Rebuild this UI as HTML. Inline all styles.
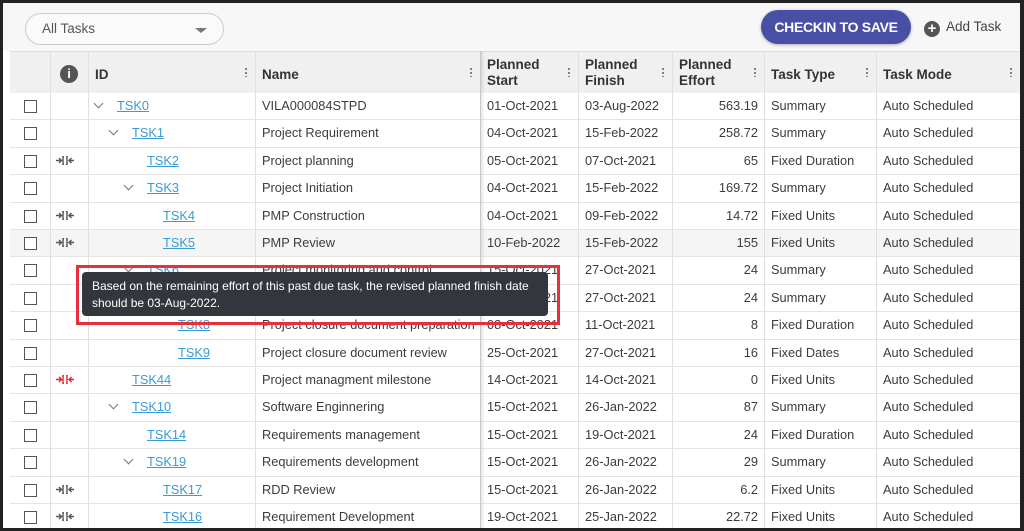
<!DOCTYPE html>
<html><head><meta charset="utf-8"><style>
*{box-sizing:border-box;margin:0;padding:0}
body{width:1024px;height:531px;overflow:hidden;background:#222;font-family:"Liberation Sans",sans-serif;font-size:12.8px;color:#3c3c3c;position:relative}
#f{position:absolute;left:3px;top:3px;width:1017px;height:525px;background:#fff;overflow:hidden}
.top{position:absolute;left:0;top:0;width:100%;height:48px;background:#f7f7f7}
.sel{position:absolute;left:22px;top:10px;width:199px;height:32px;border:1px solid #ccc;border-radius:16px;background:#fafafa;color:#555;padding:7px 0 0 16px;font-size:13.5px}
.sel:after{content:"";position:absolute;right:16px;top:14px;border:5px solid transparent;border-top:5px solid #777;border-bottom:0;border-left-width:6px;border-right-width:6px}
.btn{position:absolute;left:758px;top:7px;width:150px;height:34px;border-radius:17px;background:#4a4fa6;color:#fff;font-weight:bold;font-size:14px;text-align:center;line-height:34px;box-shadow:0 1px 3px rgba(0,0,0,.3);letter-spacing:-0.3px}
.add{position:absolute;left:921px;top:16px;color:#444;font-size:13.5px}
.add b{display:inline-block;width:16px;height:16px;border-radius:50%;background:#555;color:#fff;text-align:center;line-height:16px;font-size:15px;margin-right:6px;vertical-align:-2px}
.hdr{position:absolute;left:7px;top:48px;height:42px;width:1010px;background:#f0f0f0;border-top:1px solid #ddd}
.row{position:absolute;left:7px;height:27.4px;width:1010px;border-bottom:1px solid #e4e4e4}
.c{position:absolute;top:0;height:100%;border-left:1px solid #e0e0e0;white-space:nowrap;overflow:hidden}
.row .c{line-height:26px}
.hdr .c{font-weight:bold;color:#333;font-size:13.5px}
.k{position:absolute;right:8px;top:15px;width:2px;height:10px;background:radial-gradient(circle,#777 1px,transparent 1.2px) 0 0/2px 4px}
.cb{position:absolute;left:14px;top:7px;width:13px;height:13px;border:1px solid #555;background:#fff}
a{color:#3a9bd5;text-decoration:underline;position:absolute}
.ch{position:absolute;top:7px;width:7px;height:7px;border-right:1.5px solid #777;border-bottom:1.5px solid #777;transform:rotate(45deg)}
.ic{position:absolute;left:5px;top:8px}
.r{text-align:right;padding-right:6px}
.p{padding-left:6px}
.tip{position:absolute;left:79px;top:269px;width:466px;height:44px;background:#33363d;border-radius:4px;color:#fff;font-size:12px;padding:6px 10px;line-height:17px}
.red{position:absolute;left:73px;top:262px;width:484px;height:60px;border:3.5px solid #e8303a}
.sh{position:absolute;left:477px;top:48px;width:5px;height:480px;background:linear-gradient(to right,rgba(0,0,0,.12),rgba(0,0,0,0))}
</style></head><body><div id="f">
<div class="top"><div class="sel">All Tasks</div><div class="btn">CHECKIN TO SAVE</div><div class="add"><b>+</b>Add Task</div></div>
<div class="hdr">
<div class="c" style="left:0;width:40px;border-left:0"></div>
<div class="c" style="left:40px;width:38px"><span style="position:absolute;left:9px;top:13px;width:18px;height:18px;border-radius:50%;background:#555;color:#fff;text-align:center;line-height:18px;font-size:13px">i</span></div>
<div class="c" style="left:78px;width:167px"><span style="position:absolute;left:6px;top:15px">ID</span><i class="k"></i></div>
<div class="c" style="left:245px;width:225px"><span style="position:absolute;left:6px;top:15px">Name</span><i class="k"></i></div>
<div class="c" style="left:470px;width:98px"><span style="position:absolute;left:6px;top:5px;line-height:16px">Planned<br>Start</span><i class="k"></i></div>
<div class="c" style="left:568px;width:94px"><span style="position:absolute;left:6px;top:5px;line-height:16px">Planned<br>Finish</span><i class="k"></i></div>
<div class="c" style="left:662px;width:92px"><span style="position:absolute;left:6px;top:5px;line-height:16px">Planned<br>Effort</span><i class="k"></i></div>
<div class="c" style="left:754px;width:112px"><span style="position:absolute;left:6px;top:15px">Task Type</span><i class="k"></i></div>
<div class="c" style="left:866px;width:144px"><span style="position:absolute;left:6px;top:15px">Task Mode</span><i class="k"></i></div>
</div>
<svg width="0" height="0" style="position:absolute"><defs><g id="ico"><path d="M0 4.5h5M3 2l2.5 2.5L3 7M8 .5H7v8h1M10 .5h1v8h-1M13 4.5h5M15.5 2L13 4.5 15.5 7" fill="none" stroke-width="1.4"/></g></defs></svg>

<div class="row" style="top:90px"><div class="c" style="left:0;width:40px;border-left:0"><i class="cb"></i></div><div class="c" style="left:40px;width:38px"></div><div class="c" style="left:78px;width:167px"><i class="ch" style="left:6px"></i><a style="left:28px">TSK0</a></div><div class="c p" style="left:245px;width:225px">VILA000084STPD</div><div class="c p" style="left:470px;width:98px">01-Oct-2021</div><div class="c p" style="left:568px;width:94px">03-Aug-2022</div><div class="c r" style="left:662px;width:92px">563.19</div><div class="c p" style="left:754px;width:112px">Summary</div><div class="c p" style="left:866px;width:144px">Auto Scheduled</div></div>

<div class="row" style="top:117.4px"><div class="c" style="left:0;width:40px;border-left:0"><i class="cb"></i></div><div class="c" style="left:40px;width:38px"></div><div class="c" style="left:78px;width:167px"><i class="ch" style="left:21px"></i><a style="left:43px">TSK1</a></div><div class="c p" style="left:245px;width:225px">Project Requirement</div><div class="c p" style="left:470px;width:98px">04-Oct-2021</div><div class="c p" style="left:568px;width:94px">15-Feb-2022</div><div class="c r" style="left:662px;width:92px">258.72</div><div class="c p" style="left:754px;width:112px">Summary</div><div class="c p" style="left:866px;width:144px">Auto Scheduled</div></div>

<div class="row" style="top:144.8px"><div class="c" style="left:0;width:40px;border-left:0"><i class="cb"></i></div><div class="c" style="left:40px;width:38px"><svg class="ic" width="18" height="9" stroke="#555"><use href="#ico"/></svg></div><div class="c" style="left:78px;width:167px"><a style="left:58px">TSK2</a></div><div class="c p" style="left:245px;width:225px">Project planning</div><div class="c p" style="left:470px;width:98px">05-Oct-2021</div><div class="c p" style="left:568px;width:94px">07-Oct-2021</div><div class="c r" style="left:662px;width:92px">65</div><div class="c p" style="left:754px;width:112px">Fixed Duration</div><div class="c p" style="left:866px;width:144px">Auto Scheduled</div></div>

<div class="row" style="top:172.2px"><div class="c" style="left:0;width:40px;border-left:0"><i class="cb"></i></div><div class="c" style="left:40px;width:38px"></div><div class="c" style="left:78px;width:167px"><i class="ch" style="left:36px"></i><a style="left:58px">TSK3</a></div><div class="c p" style="left:245px;width:225px">Project Initiation</div><div class="c p" style="left:470px;width:98px">04-Oct-2021</div><div class="c p" style="left:568px;width:94px">15-Feb-2022</div><div class="c r" style="left:662px;width:92px">169.72</div><div class="c p" style="left:754px;width:112px">Summary</div><div class="c p" style="left:866px;width:144px">Auto Scheduled</div></div>

<div class="row" style="top:199.6px"><div class="c" style="left:0;width:40px;border-left:0"><i class="cb"></i></div><div class="c" style="left:40px;width:38px"><svg class="ic" width="18" height="9" stroke="#555"><use href="#ico"/></svg></div><div class="c" style="left:78px;width:167px"><a style="left:74px">TSK4</a></div><div class="c p" style="left:245px;width:225px">PMP Construction</div><div class="c p" style="left:470px;width:98px">04-Oct-2021</div><div class="c p" style="left:568px;width:94px">09-Feb-2022</div><div class="c r" style="left:662px;width:92px">14.72</div><div class="c p" style="left:754px;width:112px">Fixed Units</div><div class="c p" style="left:866px;width:144px">Auto Scheduled</div></div>

<div class="row" style="top:227px;background:#f5f5f5"><div class="c" style="left:0;width:40px;border-left:0"><i class="cb"></i></div><div class="c" style="left:40px;width:38px"><svg class="ic" width="18" height="9" stroke="#555"><use href="#ico"/></svg></div><div class="c" style="left:78px;width:167px"><a style="left:74px">TSK5</a></div><div class="c p" style="left:245px;width:225px">PMP Review</div><div class="c p" style="left:470px;width:98px">10-Feb-2022</div><div class="c p" style="left:568px;width:94px">15-Feb-2022</div><div class="c r" style="left:662px;width:92px">155</div><div class="c p" style="left:754px;width:112px">Fixed Units</div><div class="c p" style="left:866px;width:144px">Auto Scheduled</div></div>

<div class="row" style="top:254.4px"><div class="c" style="left:0;width:40px;border-left:0"><i class="cb"></i></div><div class="c" style="left:40px;width:38px"></div><div class="c" style="left:78px;width:167px"><i class="ch" style="left:36px"></i><a style="left:58px">TSK6</a></div><div class="c p" style="left:245px;width:225px">Project monitoring and control</div><div class="c p" style="left:470px;width:98px">15-Oct-2021</div><div class="c p" style="left:568px;width:94px">27-Oct-2021</div><div class="c r" style="left:662px;width:92px">24</div><div class="c p" style="left:754px;width:112px">Summary</div><div class="c p" style="left:866px;width:144px">Auto Scheduled</div></div>

<div class="row" style="top:281.8px"><div class="c" style="left:0;width:40px;border-left:0"><i class="cb"></i></div><div class="c" style="left:40px;width:38px"></div><div class="c" style="left:78px;width:167px"><a style="left:74px">TSK7</a></div><div class="c p" style="left:245px;width:225px">Project closure</div><div class="c p" style="left:470px;width:98px">08-Oct-2021</div><div class="c p" style="left:568px;width:94px">27-Oct-2021</div><div class="c r" style="left:662px;width:92px">24</div><div class="c p" style="left:754px;width:112px">Summary</div><div class="c p" style="left:866px;width:144px">Auto Scheduled</div></div>

<div class="row" style="top:309.2px"><div class="c" style="left:0;width:40px;border-left:0"><i class="cb"></i></div><div class="c" style="left:40px;width:38px"></div><div class="c" style="left:78px;width:167px"><a style="left:89px">TSK8</a></div><div class="c p" style="left:245px;width:225px">Project closure document preparation</div><div class="c p" style="left:470px;width:98px">08-Oct-2021</div><div class="c p" style="left:568px;width:94px">11-Oct-2021</div><div class="c r" style="left:662px;width:92px">8</div><div class="c p" style="left:754px;width:112px">Fixed Duration</div><div class="c p" style="left:866px;width:144px">Auto Scheduled</div></div>

<div class="row" style="top:336.6px"><div class="c" style="left:0;width:40px;border-left:0"><i class="cb"></i></div><div class="c" style="left:40px;width:38px"></div><div class="c" style="left:78px;width:167px"><a style="left:89px">TSK9</a></div><div class="c p" style="left:245px;width:225px">Project closure document review</div><div class="c p" style="left:470px;width:98px">25-Oct-2021</div><div class="c p" style="left:568px;width:94px">27-Oct-2021</div><div class="c r" style="left:662px;width:92px">16</div><div class="c p" style="left:754px;width:112px">Fixed Dates</div><div class="c p" style="left:866px;width:144px">Auto Scheduled</div></div>

<div class="row" style="top:364px"><div class="c" style="left:0;width:40px;border-left:0"><i class="cb"></i></div><div class="c" style="left:40px;width:38px"><svg class="ic" width="18" height="9" stroke="#e8202a"><use href="#ico"/></svg></div><div class="c" style="left:78px;width:167px"><a style="left:43px">TSK44</a></div><div class="c p" style="left:245px;width:225px">Project managment milestone</div><div class="c p" style="left:470px;width:98px">14-Oct-2021</div><div class="c p" style="left:568px;width:94px">14-Oct-2021</div><div class="c r" style="left:662px;width:92px">0</div><div class="c p" style="left:754px;width:112px">Fixed Units</div><div class="c p" style="left:866px;width:144px">Auto Scheduled</div></div>

<div class="row" style="top:391.4px"><div class="c" style="left:0;width:40px;border-left:0"><i class="cb"></i></div><div class="c" style="left:40px;width:38px"></div><div class="c" style="left:78px;width:167px"><i class="ch" style="left:21px"></i><a style="left:43px">TSK10</a></div><div class="c p" style="left:245px;width:225px">Software Enginnering</div><div class="c p" style="left:470px;width:98px">15-Oct-2021</div><div class="c p" style="left:568px;width:94px">26-Jan-2022</div><div class="c r" style="left:662px;width:92px">87</div><div class="c p" style="left:754px;width:112px">Summary</div><div class="c p" style="left:866px;width:144px">Auto Scheduled</div></div>

<div class="row" style="top:418.8px"><div class="c" style="left:0;width:40px;border-left:0"><i class="cb"></i></div><div class="c" style="left:40px;width:38px"></div><div class="c" style="left:78px;width:167px"><a style="left:58px">TSK14</a></div><div class="c p" style="left:245px;width:225px">Requirements management</div><div class="c p" style="left:470px;width:98px">15-Oct-2021</div><div class="c p" style="left:568px;width:94px">19-Oct-2021</div><div class="c r" style="left:662px;width:92px">24</div><div class="c p" style="left:754px;width:112px">Fixed Duration</div><div class="c p" style="left:866px;width:144px">Auto Scheduled</div></div>

<div class="row" style="top:446.2px"><div class="c" style="left:0;width:40px;border-left:0"><i class="cb"></i></div><div class="c" style="left:40px;width:38px"></div><div class="c" style="left:78px;width:167px"><i class="ch" style="left:36px"></i><a style="left:58px">TSK19</a></div><div class="c p" style="left:245px;width:225px">Requirements development</div><div class="c p" style="left:470px;width:98px">15-Oct-2021</div><div class="c p" style="left:568px;width:94px">26-Jan-2022</div><div class="c r" style="left:662px;width:92px">29</div><div class="c p" style="left:754px;width:112px">Summary</div><div class="c p" style="left:866px;width:144px">Auto Scheduled</div></div>

<div class="row" style="top:473.6px"><div class="c" style="left:0;width:40px;border-left:0"><i class="cb"></i></div><div class="c" style="left:40px;width:38px"><svg class="ic" width="18" height="9" stroke="#555"><use href="#ico"/></svg></div><div class="c" style="left:78px;width:167px"><a style="left:74px">TSK17</a></div><div class="c p" style="left:245px;width:225px">RDD Review</div><div class="c p" style="left:470px;width:98px">15-Oct-2021</div><div class="c p" style="left:568px;width:94px">26-Jan-2022</div><div class="c r" style="left:662px;width:92px">6.2</div><div class="c p" style="left:754px;width:112px">Fixed Units</div><div class="c p" style="left:866px;width:144px">Auto Scheduled</div></div>

<div class="row" style="top:501px"><div class="c" style="left:0;width:40px;border-left:0"><i class="cb"></i></div><div class="c" style="left:40px;width:38px"><svg class="ic" width="18" height="9" stroke="#555"><use href="#ico"/></svg></div><div class="c" style="left:78px;width:167px"><a style="left:74px">TSK16</a></div><div class="c p" style="left:245px;width:225px">Requirement Development</div><div class="c p" style="left:470px;width:98px">19-Oct-2021</div><div class="c p" style="left:568px;width:94px">25-Jan-2022</div><div class="c r" style="left:662px;width:92px">22.72</div><div class="c p" style="left:754px;width:112px">Fixed Units</div><div class="c p" style="left:866px;width:144px">Auto Scheduled</div></div>

<div class="sh"></div>
<div class="tip">Based on the remaining effort of this past due task, the revised planned finish date should be 03-Aug-2022.</div>
<div class="red"></div>
</div></body></html>
